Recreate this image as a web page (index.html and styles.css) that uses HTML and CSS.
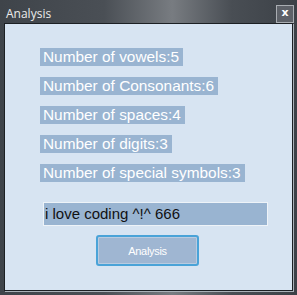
FILE: index.html
```html
<!DOCTYPE html>
<html lang="en">
<head>
    <meta charset="UTF-8">
    <title>Analysis</title>
    <link rel="stylesheet" href="styles.css">
</head>
<body>
    <div class="window">
        <div class="titlebar">
            <span class="title">Analysis</span>
            <span class="close">x</span>
        </div>
        <div class="content">
            <!-- resultados -->
            <div class="results">
                <span class="label">Number of vowels:5</span>
                <span class="label">Number of Consonants:6</span>
                <span class="label">Number of spaces:4</span>
                <span class="label">Number of digits:3</span>
                <span class="label">Number of special symbols:3</span>
            </div>
            <input class="textbox" type="text" value="i love coding ^!^ 666">
            <button class="button">Analysis</button>
        </div>
    </div>
</body>
</html>
```

FILE: styles.css
```css
body {
    margin: 0;
    background: #3b4046;
}
.window {
    width: 297px;
    height: 295px;
    box-sizing: border-box;
    display: flex;
    flex-direction: column;
    background: linear-gradient(90deg, #3f444a 0%, #4a4f55 35%, #787c81 58%, #494e54 78%, #3c4147 100%);
    padding: 0 4px 4px 4px;
}
.titlebar {
    height: 23px;
    display: flex;
    align-items: center;
    justify-content: space-between;
    flex-shrink: 0;
}
.title {
    font-family: "Open Sans", sans-serif;
    font-size: 12px;
    color: #ebebeb;
    margin-left: 2px;
    margin-top: 3px;
}
.close {
    width: 16px;
    height: 16px;
    border: 1px solid #a9adb2;
    background: #5d6168;
    color: #ffffff;
    font-family: "DejaVu Sans", sans-serif;
    font-weight: bold;
    font-size: 11px;
    line-height: 14px;
    text-align: center;
    margin-right: -1px;
    margin-top: 5px;
}
.content {
    flex: 1;
    background: #d7e4f2;
    border: 1px solid #1c2024;
    box-shadow: 1px 1px 0 #aab1b8;
    display: flex;
    flex-direction: column;
    align-items: flex-start;
    padding: 24px 0 0 0;
}
.results {
    display: flex;
    flex-direction: column;
    align-items: flex-start;
    gap: 11px;
    margin-left: 35px;
}
.label {
    display: block;
    height: 18px;
    line-height: 18px;
    padding: 0 4px 0 3px;
    background: #99b4d1;
    color: #ffffff;
    font-family: "Liberation Sans", Arial, sans-serif;
    font-size: 15.4px;
    white-space: nowrap;
}
.textbox {
    margin: 20px 0 0 38px;
    width: 225px;
    height: 24px;
    box-sizing: border-box;
    border: 1px solid #eef3f8;
    background: #99b4d1;
    color: #111111;
    font-family: "Liberation Sans", Arial, sans-serif;
    font-size: 15px;
    padding: 0 1px 1px 1px;
    outline: none;
}
.button {
    margin: 9px 0 0 91px;
    width: 103px;
    height: 31px;
    box-sizing: border-box;
    border: 2px solid #4aa3d8;
    border-radius: 3px;
    background: #9fb6d2;
    box-shadow: inset 0 0 0 1px #b9cbe0;
    color: #ffffff;
    font-family: "Liberation Sans", Arial, sans-serif;
    font-size: 11px;
    letter-spacing: -0.3px;
}
```
